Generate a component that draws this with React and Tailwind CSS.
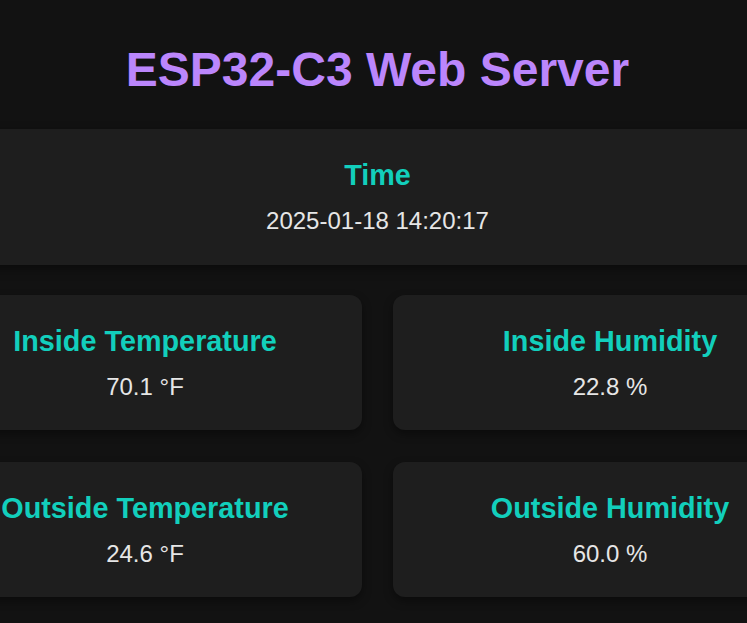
const readings = [
  { label: "Inside Temperature", value: "70.1 °F" },
  { label: "Inside Humidity", value: "22.8 %" },
  { label: "Outside Temperature", value: "24.6 °F" },
  { label: "Outside Humidity", value: "60.0 %" },
];

const Card = ({ label, value, className = "" }) => (
  <div
    className={`bg-[#1e1e1e] flex flex-col items-center text-center shadow-[0_4px_10px_rgba(0,0,0,0.4)] ${className}`}
  >
    <h2 className="text-[28.8px] leading-[33px] font-bold text-[#12cfbc]">
      {label}
    </h2>
    <p className="text-[24px] leading-[28px] text-[#e6e6e6]">{value}</p>
  </div>
);

export default function App() {
  return (
    <div className="min-h-screen bg-[#121212] overflow-hidden font-['Liberation_Sans',Arial,sans-serif]">
      <div className="w-[899px] ml-[-72px]">
        <h1 className="pt-[42px] text-center text-[48px] leading-[55px] font-bold text-[#bb86fc]">
          ESP32-C3 Web Server
        </h1>
        <Card
          label="Time"
          value="2025-01-18 14:20:17"
          className="mt-[32px] h-[136px] pt-[30px] gap-[15px]"
        />
        <div className="grid grid-cols-2 gap-x-[31px] gap-y-[32px] mt-[30px]">
          {readings.map((r) => (
            <Card
              key={r.label}
              label={r.label}
              value={r.value}
              className="h-[135px] rounded-[12px] pt-[30px] gap-[15px]"
            />
          ))}
        </div>
      </div>
    </div>
  );
}
